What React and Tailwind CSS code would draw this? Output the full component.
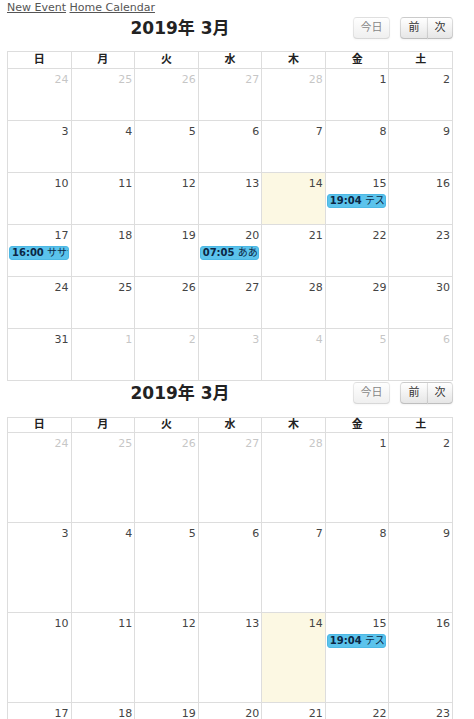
import React from "react";

const FONT = { fontFamily: '"DejaVu Sans", "Noto Sans CJK JP", sans-serif' };

const DOW = ["日", "月", "火", "水", "木", "金", "土"];

// Feb 24 2019 .. Apr 6 2019
const buildWeeks = () => {
  const weeks = [];
  const start = new Date(2019, 1, 24);
  for (let w = 0; w < 6; w++) {
    const days = [];
    for (let d = 0; d < 7; d++) {
      const date = new Date(start);
      date.setDate(start.getDate() + w * 7 + d);
      days.push({ day: date.getDate(), other: date.getMonth() !== 2 });
    }
    weeks.push(days);
  }
  return weeks;
};

const events = {
  15: "19:04 テス",
  17: "16:00 ササササ",
  20: "07:05 あああ",
};

function Event({ text }) {
  const [time, ...rest] = text.split(" ");
  return (
    <div className="ml-[1px] mr-[2px] mt-[3px] h-[14px] overflow-hidden whitespace-nowrap rounded-[3px] border border-[#4cb8e4] bg-[#5bc3ec] pl-[2px] text-[10px] leading-[12px] text-[#0b2745]">
      <span className="font-bold">{time}</span> {rest.join(" ")}
    </div>
  );
}

function Button({ children, className = "" }) {
  return (
    <button
      className={
        "h-[22px] border border-[rgba(0,0,0,0.12)] border-b-[rgba(0,0,0,0.25)] bg-gradient-to-b from-white to-[#e6e6e6] text-center text-[11px] text-[#333] shadow-[inset_0_1px_0_rgba(255,255,255,0.2),0_1px_2px_rgba(0,0,0,0.05)] " +
        className
      }
    >
      {children}
    </button>
  );
}

function Calendar({ rowClass, headClass, barClass }) {
  const weeks = buildWeeks();
  return (
    <div>
      <div className={"flex h-[22px] items-start " + barClass}>
        <div className="flex-1 text-center">
          <h2 className="-mt-[6px] inline-block text-[17px] font-bold leading-[18px] text-[#222]">
            2019年 3月
          </h2>
        </div>
        <div className="flex">
          <Button className="w-[37px] rounded-[4px] opacity-60">今日</Button>
          <div className="ml-[10px] flex">
            <Button className="w-[28px] rounded-l-[4px]">前</Button>
            <Button className="-ml-[1px] w-[26px] rounded-r-[4px]">次</Button>
          </div>
        </div>
      </div>
      <div className="border-l border-t border-[#ddd]">
        <div className="grid grid-cols-7">
          {DOW.map((d) => (
            <div
              key={d}
              className={
                "flex items-center justify-center border-b border-r border-[#ddd] text-[11px] font-bold leading-[14px] text-[#222] " +
                headClass
              }
            >
              {d}
            </div>
          ))}
        </div>
        {weeks.map((week, wi) => (
          <div key={wi} className="grid grid-cols-7">
            {week.map((c, ci) => {
              const isToday = !c.other && c.day === 14;
              const ev = !c.other && events[c.day];
              return (
                <div
                  key={ci}
                  className={
                    "overflow-hidden border-b border-r border-[#ddd] " +
                    rowClass +
                    (isToday ? " bg-[#fcf8e3]" : "")
                  }
                >
                  <div
                    className={
                      "pr-[2px] pt-[4px] text-right text-[11px] leading-[14px] text-[#444]" +
                      (c.other ? " opacity-30" : "")
                    }
                  >
                    {c.day}
                  </div>
                  {ev && <Event text={ev} />}
                </div>
              );
            })}
          </div>
        ))}
      </div>
    </div>
  );
}

export default function App() {
  return (
    <div className="w-[453px] bg-white pl-[7px]" style={FONT}>
      <div className="h-[15px] text-[11px] leading-[15px]">
        <a href="#" className="text-[#555] underline">
          New Event
        </a>{" "}
        <a href="#" className="text-[#555] underline">
          Home Calendar
        </a>
      </div>
      <Calendar
        rowClass="h-[52px]"
        headClass="h-[17px]"
        barClass="mt-[2px] mb-[12px]"
      />
      <Calendar
        rowClass="h-[90px]"
        headClass="h-[15px]"
        barClass="mt-[1px] mb-[13px]"
      />
    </div>
  );
}
